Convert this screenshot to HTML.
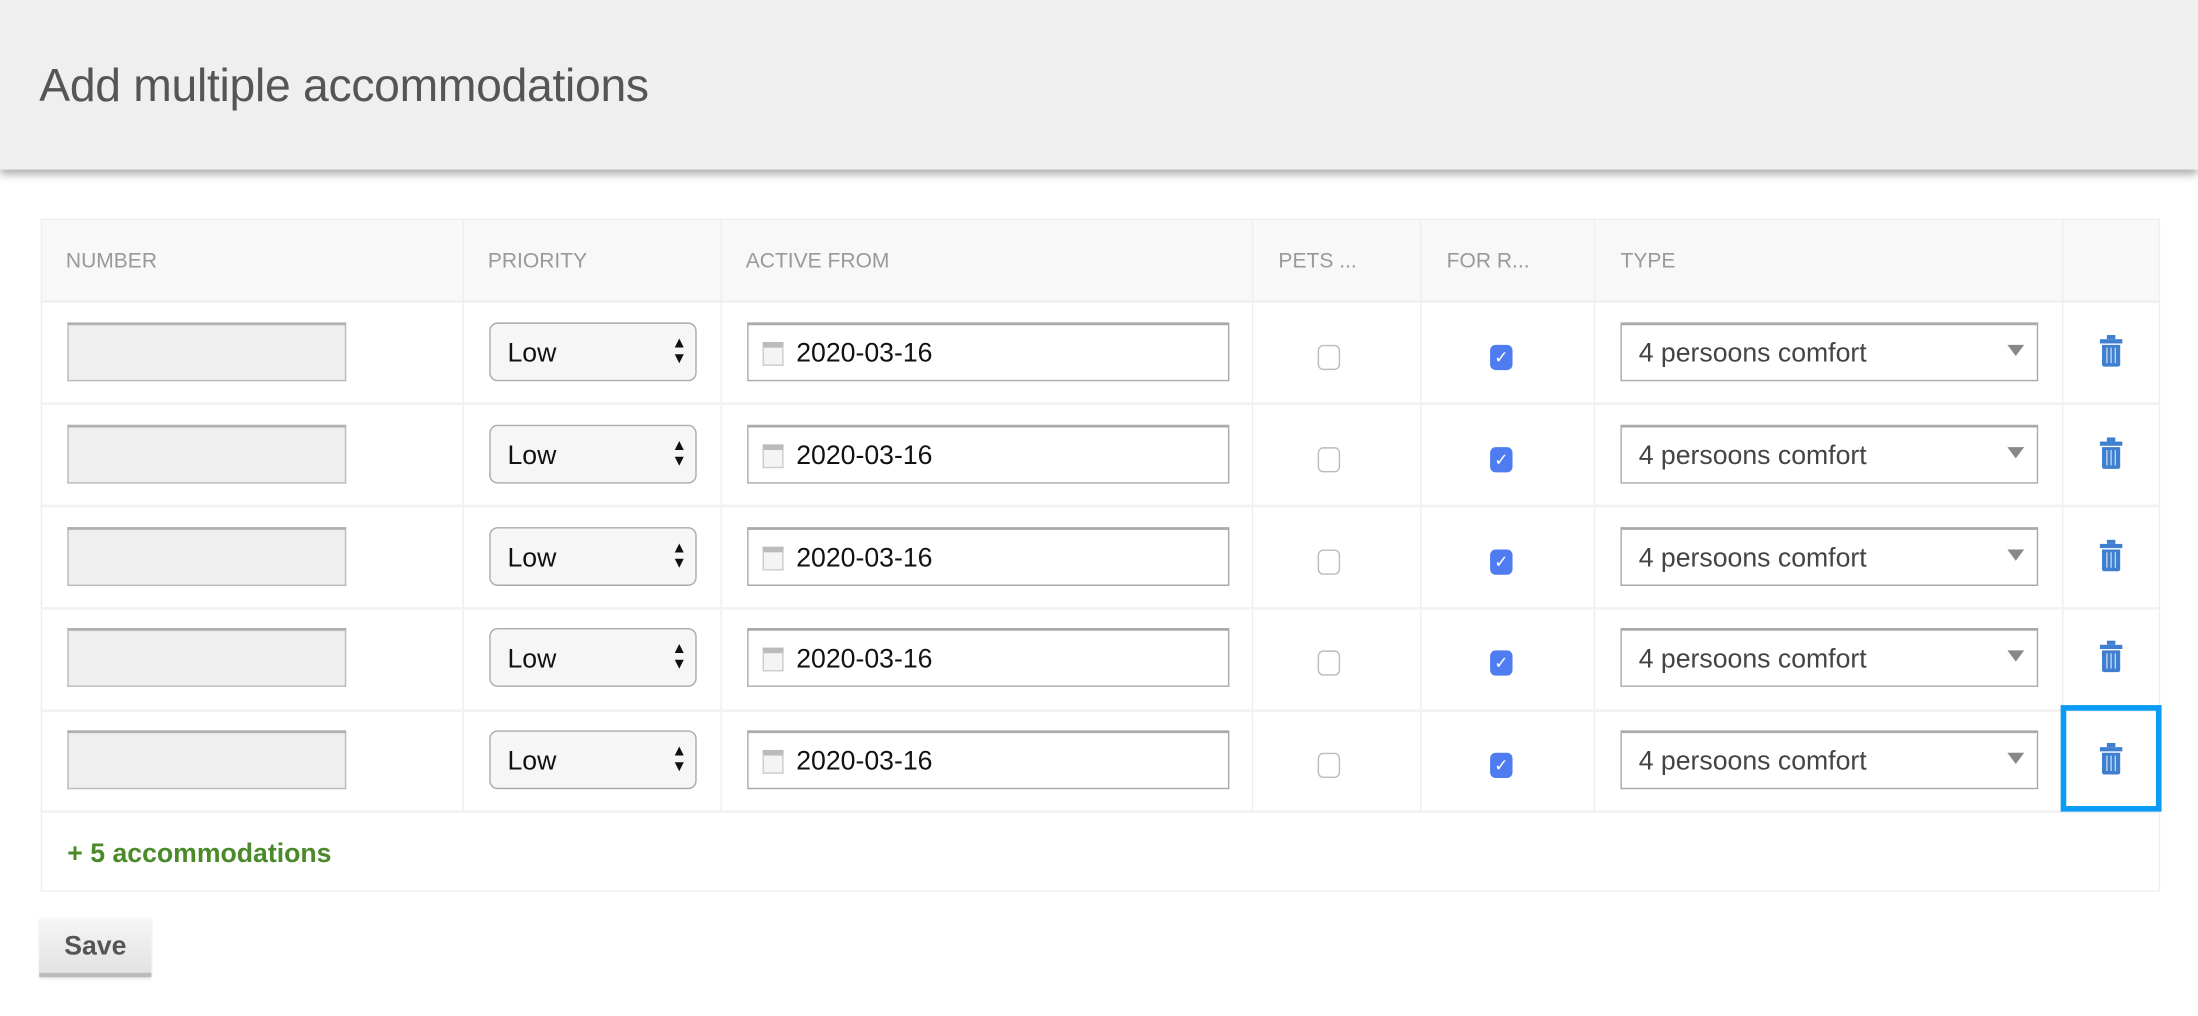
<!DOCTYPE html>
<html><head><meta charset="utf-8"><style>
html,body{margin:0;padding:0;background:#fff;overflow:hidden;width:2198px;height:1016px}
#w{position:absolute;left:0;top:0;width:1568px;height:725px;transform:scale(1.40179);transform-origin:0 0;font-family:"Liberation Sans",Arial,sans-serif}
.hdr{position:absolute;left:0;top:0;width:1568px;height:121px;background:#efefef;box-shadow:0 3px 6px rgba(0,0,0,.35)}
.hdr h1{position:absolute;left:28px;top:42px;margin:0;font-weight:300;font-size:33px;color:#555;letter-spacing:-0.2px}
.tbl{position:absolute;left:29px;top:156px;width:1512px;height:480px;border:1px solid #eee;box-sizing:border-box}
.hrow{position:absolute;left:0;top:0;width:100%;height:59px;background:#f8f8f8;border-bottom:2px solid #f0f0f0;box-sizing:border-box}
.th{position:absolute;top:21px;font-size:15px;color:#999}
.vl{position:absolute;top:0;width:1px;height:423px;background:#eee}
.hl{position:absolute;left:0;width:100%;height:2px;background:#f2f2f2}
.num{position:absolute;left:18px;width:199px;height:42px;border:1px solid #bbb;border-top:2px solid #b0b0b0;background:#efefef;box-sizing:border-box}
.sel{position:absolute;left:319px;width:148px;height:42px;border:1px solid #aaa;border-radius:6px;background:#f6f6f6;box-sizing:border-box;font-size:19px;padding:11px 0 0 12px;color:#111}
.sel .ar{position:absolute;right:6px;top:9px;font-size:11px;line-height:11px;color:#111}
.dt{position:absolute;left:503px;width:344px;height:42px;border:1px solid #aaa;border-top:2px solid #aaa;box-sizing:border-box;font-size:19px;padding:10px 0 0 34px;color:#111;background:#fff}
.cal{position:absolute;left:10px;top:12px;width:15px;height:17px;border:1px solid #ccc;box-sizing:border-box;background:#f4f4f4;border-top:4px solid #bbb}
.cb{position:absolute;width:16px;height:18px;border:1px solid #bbb;border-radius:4px;box-sizing:border-box;background:#fff}
.cb.on{background:#4f7cf0;border-color:#4f7cf0;color:#fff;font-size:12px;text-align:center;line-height:17px}
.ty{position:absolute;left:1126px;width:298px;height:42px;border:1px solid #aaa;border-top:2px solid #aaa;box-sizing:border-box;font-size:19px;padding:10px 0 0 12px;color:#444}
.ty .tri{position:absolute;right:9px;top:14px;width:0;height:0;border-left:6px solid transparent;border-right:6px solid transparent;border-top:8px solid #888}
.tr{position:absolute;left:1467px}
.add{position:absolute;left:18px;top:442px;color:#4a8a2a;font-size:19px;font-weight:bold}
.sel2{position:absolute;left:1440px;top:346px;width:72px;height:76px;border:4px solid #0a9cf5;box-sizing:border-box}
.save{position:absolute;left:28px;top:655px;width:80px;height:42px;background:linear-gradient(#f6f6f6,#e2e2e2);border-bottom:3px solid #bbb;box-sizing:border-box;font-size:19px;font-weight:bold;color:#555;text-align:center;line-height:42px;box-shadow:0 1px 2px rgba(0,0,0,.15)}
</style></head><body><div id="w">
<div class="hdr"><h1>Add multiple accommodations</h1></div>
<div class="tbl">
<div class="hrow"></div>
<div class="th" style="left:17px">NUMBER</div>
<div class="th" style="left:318px">PRIORITY</div>
<div class="th" style="left:502px">ACTIVE FROM</div>
<div class="th" style="left:882px">PETS ...</div>
<div class="th" style="left:1002px">FOR R...</div>
<div class="th" style="left:1126px">TYPE</div>
<div class="vl" style="left:300px"></div><div class="vl" style="left:484px"></div><div class="vl" style="left:863px"></div><div class="vl" style="left:983px"></div><div class="vl" style="left:1107px"></div><div class="vl" style="left:1441px"></div>
<div class="hl" style="top:130px"></div><div class="hl" style="top:203px"></div><div class="hl" style="top:276px"></div><div class="hl" style="top:349px"></div><div class="hl" style="top:421px"></div>
<div id="rows"></div>
<div class="add">+ 5 accommodations</div>
<div class="sel2"></div>
</div>
<div class="save">Save</div>
</div>
<script>
var h='';for(var i=0;i<5;i++){var t=73+i*72.8;
h+='<div class="num" style="top:'+t+'px"></div>'+
'<div class="sel" style="top:'+t+'px">Low<div class="ar">▲<br>▼</div></div>'+
'<div class="dt" style="top:'+t+'px"><div class="cal"></div>2020-03-16</div>'+
'<div class="cb" style="left:910px;top:'+(t+16)+'px"></div>'+
'<div class="cb on" style="left:1033px;top:'+(t+16)+'px">✓</div>'+
'<div class="ty" style="top:'+t+'px">4 persoons comfort<div class="tri"></div></div>'+
'<svg class="tr" style="top:'+(t+9)+'px" width="18" height="23" viewBox="0 0 18 23"><rect x="6" y="0" width="6" height="3" fill="#3f7fcf"/><rect x="1" y="3" width="16" height="3" fill="#3f7fcf"/><path d="M2.5 7h13v14a1.5 1.5 0 0 1-1.5 1.5H4A1.5 1.5 0 0 1 2.5 21z" fill="#3f7fcf"/><path d="M6 9v11M9 9v11M12 9v11" stroke="#bcd3f0" stroke-width="1"/></svg>';}
document.getElementById('rows').innerHTML=h;
</script>
</body></html>
